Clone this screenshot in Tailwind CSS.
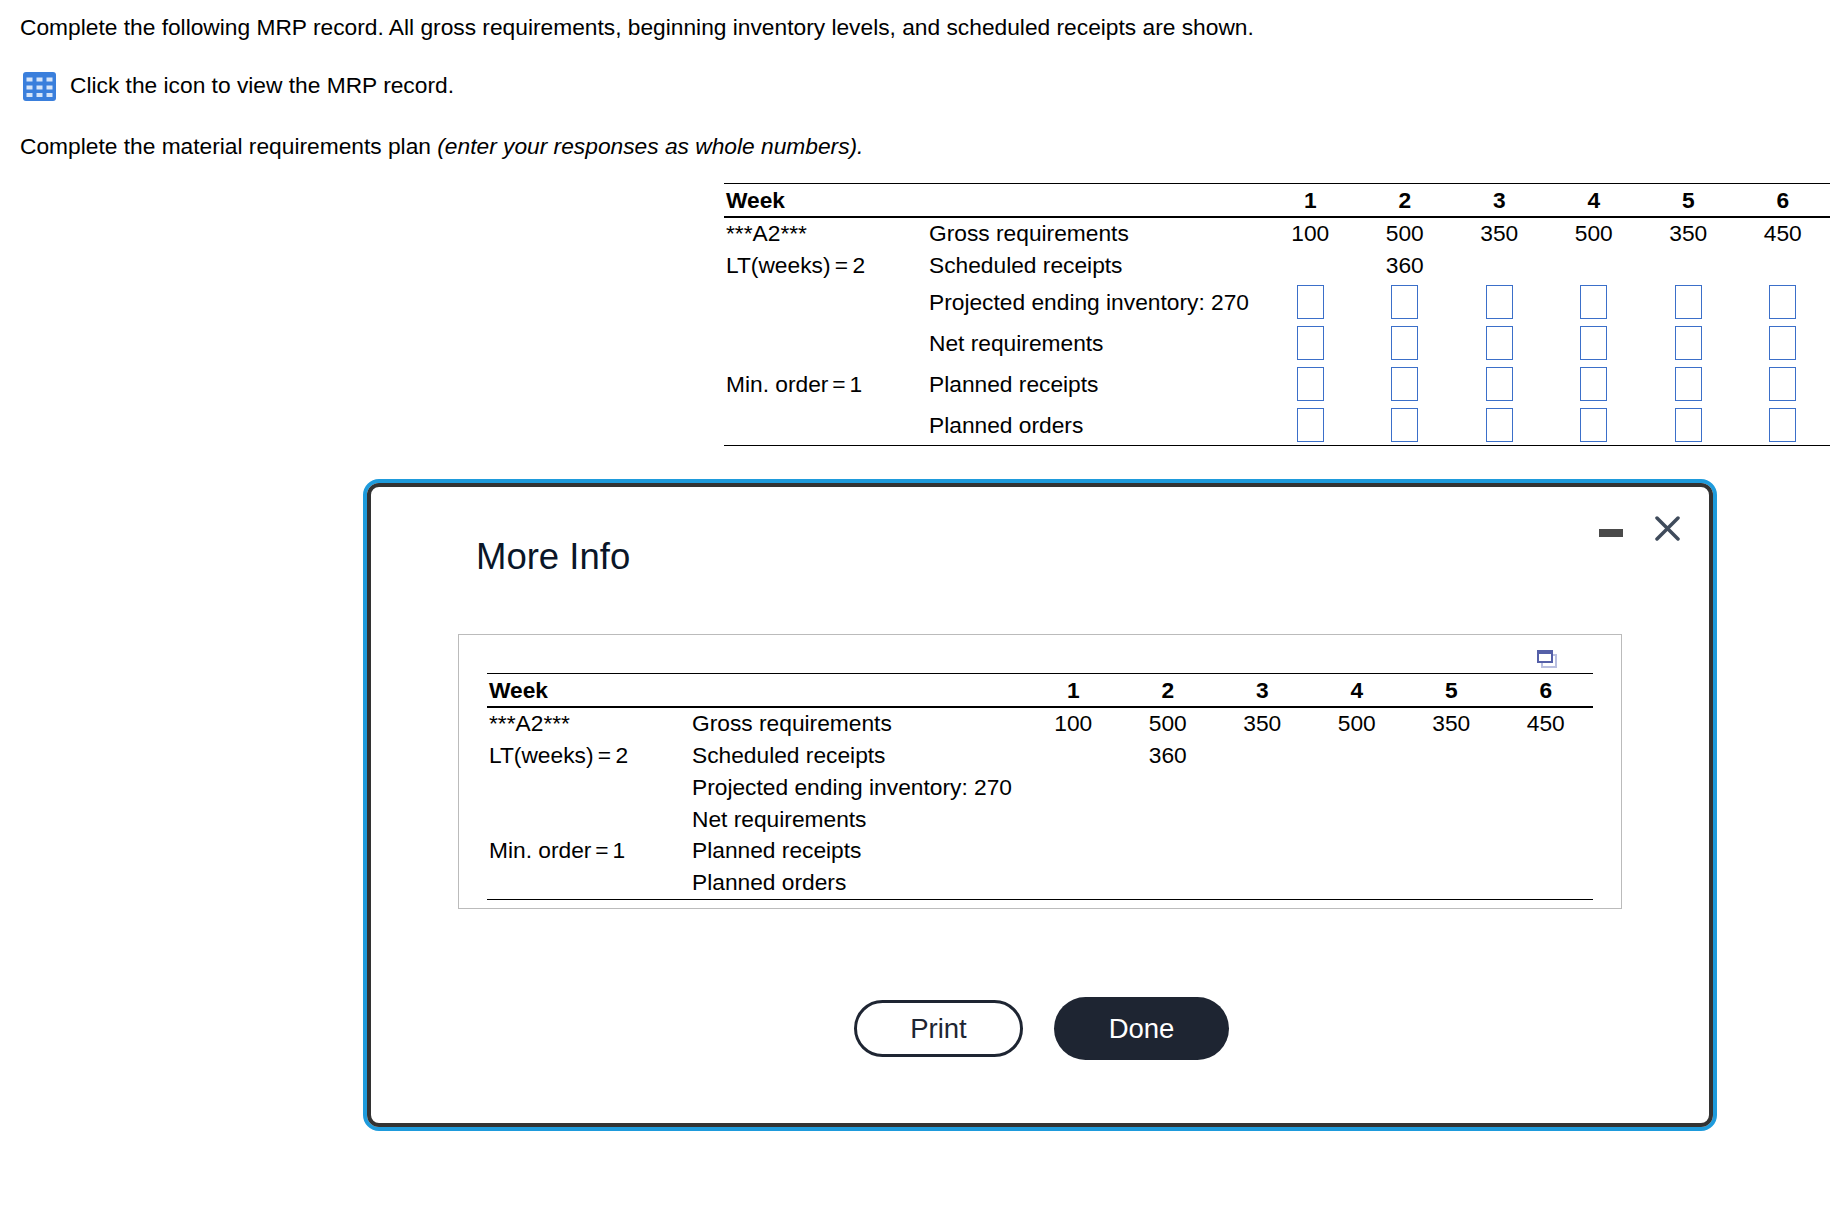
<!DOCTYPE html>
<html lang="en">
<head>
  <meta charset="UTF-8">
  <title>MRP record</title>
  <script src="https://cdn.jsdelivr.net/npm/@tailwindcss/browser@4"></script>
</head>
<body class="bg-white text-black font-['Liberation_Sans',sans-serif] text-[22.75px] leading-[32px] w-[1846px] h-[1212px] overflow-hidden">

  <!-- Question text -->
  <p class="ml-[20px] pt-[11px]">Complete the following MRP record. All gross requirements, beginning inventory levels, and scheduled receipts are shown.</p>
  <div class="flex items-center ml-[23px] mt-[26px] h-[32px]">
    <svg class="w-[33px] h-[29px] mt-[3px]" viewBox="0 0 33 29">
      <rect width="33" height="29" rx="3" fill="#3a7fdc"/>
      <g fill="#d6e5f9">
        <rect x="3.5" y="5.5" width="6" height="4"/><rect x="13.5" y="5.5" width="6" height="4"/><rect x="23.5" y="5.5" width="6" height="4"/>
        <rect x="3.5" y="13.5" width="6" height="4"/><rect x="13.5" y="13.5" width="6" height="4"/><rect x="23.5" y="13.5" width="6" height="4"/>
        <rect x="3.5" y="21" width="6" height="4"/><rect x="13.5" y="21" width="6" height="4"/><rect x="23.5" y="21" width="6" height="4"/>
      </g>
    </svg>
    <span class="ml-[14px]">Click the icon to view the MRP record.</span>
  </div>
  <p class="ml-[20px] mt-[29px]">Complete the material requirements plan <em>(enter your responses as whole numbers).</em></p>

  <!-- Answer table -->
  <table class="table-fixed ml-[724px] mt-[21px] w-[1106px] border-t border-b border-black">
    <colgroup>
      <col class="w-[205px]"><col class="w-[334px]">
      <col><col><col><col><col><col>
    </colgroup>
    <thead>
      <tr class="h-[33px] border-b-2 border-black font-bold">
        <th class="pl-[2px] text-left">Week</th><th></th>
        <th>1</th><th>2</th><th>3</th><th>4</th><th>5</th><th>6</th>
      </tr>
    </thead>
    <tbody>
      <tr class="h-[32px] align-top leading-[30px]">
        <td class="pl-[2px]">***A2***</td><td>Gross requirements</td>
        <td class="text-center">100</td><td class="text-center">500</td><td class="text-center">350</td><td class="text-center">500</td><td class="text-center">350</td><td class="text-center">450</td>
      </tr>
      <tr class="h-[33px] align-top leading-[33px]">
        <td class="pl-[2px] [word-spacing:-2px]">LT(weeks) = 2</td><td>Scheduled receipts</td>
        <td></td><td class="text-center">360</td><td></td><td></td><td></td><td></td>
      </tr>
      <tr class="h-[40px]">
        <td></td><td>Projected ending inventory: 270</td>
        <td><input class="block mx-auto w-[27px] h-[34px] border border-[#3b6fc9]"></td>
        <td><input class="block mx-auto w-[27px] h-[34px] border border-[#3b6fc9]"></td>
        <td><input class="block mx-auto w-[27px] h-[34px] border border-[#3b6fc9]"></td>
        <td><input class="block mx-auto w-[27px] h-[34px] border border-[#3b6fc9]"></td>
        <td><input class="block mx-auto w-[27px] h-[34px] border border-[#3b6fc9]"></td>
        <td><input class="block mx-auto w-[27px] h-[34px] border border-[#3b6fc9]"></td>
      </tr>
      <tr class="h-[41px]">
        <td></td><td>Net requirements</td>
        <td><input class="block mx-auto w-[27px] h-[34px] border border-[#3b6fc9]"></td>
        <td><input class="block mx-auto w-[27px] h-[34px] border border-[#3b6fc9]"></td>
        <td><input class="block mx-auto w-[27px] h-[34px] border border-[#3b6fc9]"></td>
        <td><input class="block mx-auto w-[27px] h-[34px] border border-[#3b6fc9]"></td>
        <td><input class="block mx-auto w-[27px] h-[34px] border border-[#3b6fc9]"></td>
        <td><input class="block mx-auto w-[27px] h-[34px] border border-[#3b6fc9]"></td>
      </tr>
      <tr class="h-[42px]">
        <td class="pl-[2px]">Min. <span class="[word-spacing:-2.4px]">order = 1</span></td><td>Planned receipts</td>
        <td><input class="block mx-auto w-[27px] h-[34px] border border-[#3b6fc9]"></td>
        <td><input class="block mx-auto w-[27px] h-[34px] border border-[#3b6fc9]"></td>
        <td><input class="block mx-auto w-[27px] h-[34px] border border-[#3b6fc9]"></td>
        <td><input class="block mx-auto w-[27px] h-[34px] border border-[#3b6fc9]"></td>
        <td><input class="block mx-auto w-[27px] h-[34px] border border-[#3b6fc9]"></td>
        <td><input class="block mx-auto w-[27px] h-[34px] border border-[#3b6fc9]"></td>
      </tr>
      <tr class="h-[40px]">
        <td></td><td>Planned orders</td>
        <td><input class="block mx-auto w-[27px] h-[34px] border border-[#3b6fc9]"></td>
        <td><input class="block mx-auto w-[27px] h-[34px] border border-[#3b6fc9]"></td>
        <td><input class="block mx-auto w-[27px] h-[34px] border border-[#3b6fc9]"></td>
        <td><input class="block mx-auto w-[27px] h-[34px] border border-[#3b6fc9]"></td>
        <td><input class="block mx-auto w-[27px] h-[34px] border border-[#3b6fc9]"></td>
        <td><input class="block mx-auto w-[27px] h-[34px] border border-[#3b6fc9]"></td>
      </tr>
    </tbody>
  </table>

  <!-- More Info dialog -->
  <div class="ml-[363px] mt-[33px] w-[1354px] h-[652px] rounded-[16px] border-4 border-[#1e9bdc]">
    <div class="h-full rounded-[12px] border-4 border-[#333333] bg-white">
      <div class="flex justify-between items-start h-[90px]">
        <h2 class="ml-[105px] mt-[50px] text-[36.5px] leading-[40px] text-[#0a1628]">More Info</h2>
        <div class="flex items-start gap-[32px] mt-[29px] mr-[29px]">
          <div class="mt-[13px] w-[24px] h-[8px] bg-[#4a4a4a]"></div>
          <svg class="w-[25px] h-[25px]" viewBox="0 0 25 25" fill="none" stroke="#3f4b5b" stroke-width="3.5" stroke-linecap="round">
            <path d="M2 2L23 23M23 2L2 23"/>
          </svg>
        </div>
      </div>

      <div class="ml-[87px] mt-[57px] w-[1164px] h-[275px] border border-[#bbbbbb]">
        <div class="flex justify-end h-[38px] pt-[15px] pr-[64px]">
          <svg class="w-[20px] h-[18px]" viewBox="0 0 20 18" fill="none">
            <rect x="5" y="5" width="14" height="12" stroke="#b9bfe0" stroke-width="2"/>
            <rect x="1" y="1" width="14" height="11" fill="#ffffff" stroke="#5560a8" stroke-width="2"/>
            <rect x="1" y="1" width="14" height="3" fill="#5560a8"/>
          </svg>
        </div>
        <table class="table-fixed ml-[28px] w-[1106px] border-t border-b border-black">
          <colgroup>
            <col class="w-[205px]"><col class="w-[334px]">
            <col><col><col><col><col><col>
          </colgroup>
          <thead>
            <tr class="h-[33px] border-b-2 border-black font-bold">
              <th class="pl-[2px] text-left">Week</th><th></th>
              <th>1</th><th>2</th><th>3</th><th>4</th><th>5</th><th>6</th>
            </tr>
          </thead>
          <tbody class="align-top leading-[30px]">
            <tr class="h-[32px]">
              <td class="pl-[2px]">***A2***</td><td>Gross requirements</td>
              <td class="text-center">100</td><td class="text-center">500</td><td class="text-center">350</td><td class="text-center">500</td><td class="text-center">350</td><td class="text-center">450</td>
            </tr>
            <tr class="h-[33px] leading-[32px]">
              <td class="pl-[2px] [word-spacing:-2px]">LT(weeks) = 2</td><td>Scheduled receipts</td>
              <td></td><td class="text-center">360</td><td></td><td></td><td></td><td></td>
            </tr>
            <tr class="h-[32px]"><td></td><td colspan="7">Projected ending inventory: 270</td></tr>
            <tr class="h-[31px]"><td></td><td colspan="7">Net requirements</td></tr>
            <tr class="h-[32px]"><td class="pl-[2px]">Min. <span class="[word-spacing:-2.4px]">order = 1</span></td><td colspan="7">Planned receipts</td></tr>
            <tr class="h-[33px]"><td></td><td colspan="7">Planned orders</td></tr>
          </tbody>
        </table>
      </div>

      <div class="flex items-center gap-[31px] ml-[483px] mt-[88px] text-[27.5px]">
        <button class="w-[169px] h-[57px] pt-[2px] rounded-full border-[3px] border-[#1e2532] text-[#1e2532]">Print</button>
        <button class="w-[175px] h-[63px] pt-[2px] rounded-full bg-[#1e2532] text-white">Done</button>
      </div>
    </div>
  </div>
</body>
</html>
